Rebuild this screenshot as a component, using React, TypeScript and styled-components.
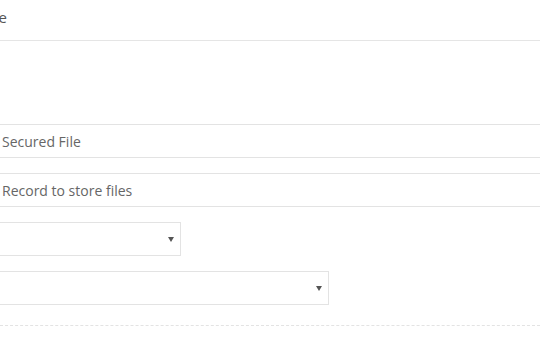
import styled, { createGlobalStyle } from 'styled-components';

const GlobalStyle = createGlobalStyle`
  body {
    margin: 0;
    background: #fff;
    font-family: "Open Sans", "Liberation Sans", sans-serif;
    overflow: hidden;
  }
`;

interface BoxProps {
  $width?: string;
}

const Page = styled.div`
  width: 540px;
  height: 337px;
  overflow: hidden;
`;

const Header = styled.div`
  height: 40px;
  border-bottom: 1px solid #e5e5e5;
  display: flex;
  align-items: center;
`;

const Title = styled.h2`
  width: 120px;
  margin: 0 0 0 -113px;
  font-size: 15px;
  font-weight: 400;
  color: #555;
  text-align: right;
  white-space: nowrap;
  line-height: 1;
  padding-bottom: 6px;
`;

const Form = styled.form`
  display: flex;
  flex-direction: column;
  gap: 15px;
  margin: 83px 0 0 -10px;
  padding-bottom: 20px;
  border-bottom: 1px dashed #e3e3e3;
`;

const Field = styled.input`
  box-sizing: border-box;
  width: 570px;
  height: 34px;
  padding: 0 11px;
  border: 1px solid #e3e3e3;
  border-radius: 0;
  background: #fff;
  font-family: inherit;
  font-size: 14px;
  color: #666;
  outline: none;
`;

const SelectWrap = styled.div<BoxProps>`
  position: relative;
  width: ${({ $width }) => $width};

  &::after {
    content: '';
    position: absolute;
    right: 7px;
    top: 50%;
    margin-top: -2px;
    border-left: 3px solid transparent;
    border-right: 3px solid transparent;
    border-top: 5px solid #555;
    pointer-events: none;
  }
`;

const Select = styled.select`
  box-sizing: border-box;
  display: block;
  width: 100%;
  height: 34px;
  padding: 0 11px;
  border: 1px solid #e3e3e3;
  border-radius: 0;
  background: #fff;
  appearance: none;
  font-family: inherit;
  font-size: 14px;
  color: #666;
  outline: none;
`;

export default function App() {
  return (
    <Page>
      <GlobalStyle />
      <Header>
        <Title>Upload File</Title>
      </Header>
      <Form>
        <Field defaultValue="Secured File" readOnly />
        <Field defaultValue="Record to store files" readOnly />
        <SelectWrap $width="191px">
          <Select defaultValue="">
            <option value=""></option>
          </Select>
        </SelectWrap>
        <SelectWrap $width="339px">
          <Select defaultValue="">
            <option value=""></option>
          </Select>
        </SelectWrap>
      </Form>
    </Page>
  );
}
